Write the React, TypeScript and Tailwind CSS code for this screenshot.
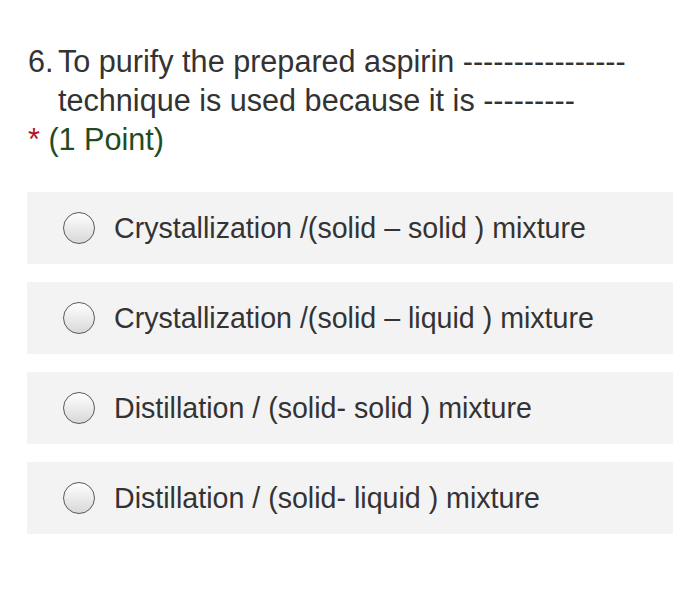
import React from "react";

const options = [
  "Crystallization /(solid – solid ) mixture",
  "Crystallization /(solid – liquid ) mixture",
  "Distillation / (solid- solid ) mixture",
  "Distillation / (solid- liquid ) mixture",
];

function Radio() {
  return (
    <span className="block h-[32px] w-[32px] shrink-0 rounded-full border-[1.5px] border-[#5a5a5a] bg-gradient-to-b from-[#ffffff] to-[#d8d8d8]" />
  );
}

export default function App() {
  return (
    <div
      className="min-h-[598px] w-[700px] bg-white pt-[42px]"
      style={{ fontFamily: '"Liberation Sans", Arial, sans-serif' }}
    >
      <div className="pl-[28px] pr-[10px] text-[30.6px] leading-[39px] text-[#333333]">
        <div className="flex">
          <span className="w-[30px] shrink-0">6.</span>
          <span className="whitespace-nowrap">
            To purify the prepared aspirin ----------------
            <br />
            technique is used because it is ---------
          </span>
        </div>
        <div>
          <span className="text-[#b0132b]">*</span>{" "}
          <span className="text-[#1f4d1f]">(1 Point)</span>
        </div>
      </div>

      <div className="mt-[33px] flex flex-col gap-[18px] px-[27px]">
        {options.map((o) => (
          <label
            key={o}
            className="flex h-[72px] items-center bg-[#f3f3f3] pl-[36px]"
          >
            <Radio />
            <span className="ml-[19px] text-[28.6px] text-[#333333]">{o}</span>
          </label>
        ))}
      </div>
    </div>
  );
}
